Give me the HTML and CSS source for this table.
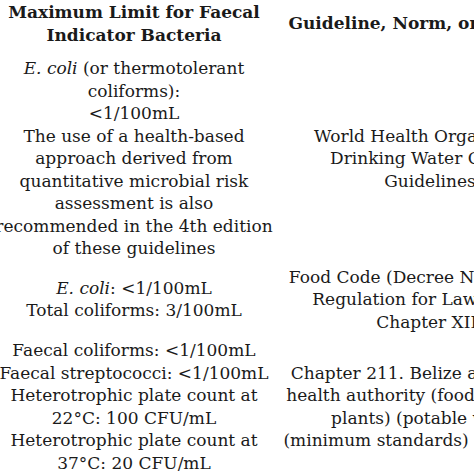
FILE: index.html
```html
<!DOCTYPE html>
<html lang="en">
<head>
<meta charset="utf-8">
<link rel="stylesheet" href="styles.css">
</head>
<body>
<div class="viewport">
  <div class="limits">
    <div class="cell head"><p>Maximum Limit for Faecal<br>Indicator Bacteria</p></div>
    <div class="cell head"><p>Guideline, Norm, or Standard</p></div>

    <div class="cell"><p><i>E. coli</i> (or thermotolerant<br>coliforms):<br>&lt;1/100mL<br>The use of a health-based<br>approach derived from<br>quantitative microbial risk<br>assessment is also<br>recommended in the 4th edition<br>of these guidelines</p></div>
    <div class="cell"><p>World Health Organization<br>Drinking Water Quality<br>Guidelines</p></div>

    <div class="cell"><p><i>E. coli</i>: &lt;1/100mL<br>Total coliforms: 3/100mL</p></div>
    <div class="cell"><p>Food Code (Decree No. 2126/71,<br>Regulation for Law 18,284,<br>Chapter XII)</p></div>

    <div class="cell"><p>Faecal coliforms: &lt;1/100mL<br>Faecal streptococci: &lt;1/100mL<br>Heterotrophic plate count at<br>22°C: 100 CFU/mL<br>Heterotrophic plate count at<br>37°C: 20 CFU/mL</p></div>
    <div class="cell"><p>Chapter 211. Belize agricultural<br>health authority (food processing<br>plants) (potable water)<br>(minimum standards) Regulations</p></div>
  </div>
</div>
</body>
</html>
```

FILE: styles.css
```css
html, body {
  margin: 0;
  padding: 0;
  background: #fff;
}
.viewport {
  width: 474px;
  height: 474px;
  overflow: hidden;
}
.limits {
  display: grid;
  grid-template-columns: 296px 296px;
  row-gap: 6px;
  margin-left: -14px;
  padding-top: 1px;
  font-family: "DejaVu Serif", serif;
  font-size: 17px;
  line-height: 22.5px;
  color: #1a1a1a;
}
.cell {
  display: flex;
  justify-content: center;
  align-items: center;
  text-align: center;
  white-space: nowrap;
}
.cell p {
  margin: 0;
}
.head {
  font-weight: bold;
  margin-bottom: 5px;
}
```
